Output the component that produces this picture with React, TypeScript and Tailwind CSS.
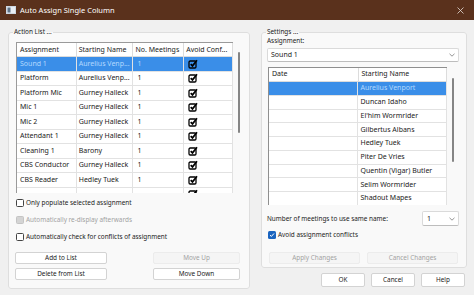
const leftRows = [
  ["Sound 1", "Aurelius Venp...", "1"],
  ["Platform", "Aurelius Venp...", "1"],
  ["Platform Mic", "Gurney Halleck", "1"],
  ["Mic 1", "Gurney Halleck", "1"],
  ["Mic 2", "Gurney Halleck", "1"],
  ["Attendant 1", "Gurney Halleck", "1"],
  ["Cleaning 1", "Barony", "1"],
  ["CBS Conductor", "Gurney Halleck", "1"],
  ["CBS Reader", "Hedley Tuek", "1"],
  ["", "", ""],
];

const rightRows = [
  "Aurelius Venport",
  "Duncan Idaho",
  "El'him Wormrider",
  "Gilbertus Albans",
  "Hedley Tuek",
  "Piter De Vries",
  "Quentin (Vigar) Butler",
  "Selim Wormrider",
  "Shadout Mapes",
];

function CheckGlyph() {
  return (
    <svg width="10" height="10" viewBox="0 0 10 10">
      <rect x="1" y="2" width="7" height="7" rx="1.2" fill="none" stroke="#000" strokeWidth="1.3" />
      <path d="M2.7 5.1 L4.5 6.9 L9 1.3" fill="none" stroke="#000" strokeWidth="1.7" />
    </svg>
  );
}

function Chevron() {
  return (
    <svg width="6" height="4" viewBox="0 0 6 4">
      <path d="M0.5 0.8 L3 3.2 L5.5 0.8" fill="none" stroke="#7a7a7a" strokeWidth="0.8" />
    </svg>
  );
}

function Box({ checked, disabled }: { checked?: boolean; disabled?: boolean }) {
  if (checked) {
    return (
      <span className="w-[8px] h-[8px] rounded-[1.5px] bg-[#1a64c0] flex items-center justify-center">
        <svg width="6" height="6" viewBox="0 0 6 6">
          <path d="M1 3.1 L2.4 4.4 L5 1.5" fill="none" stroke="#fff" strokeWidth="1" />
        </svg>
      </span>
    );
  }
  return (
    <span
      className={
        disabled
          ? "w-[8px] h-[8px] rounded-[1.5px] bg-[#d4d4d4] border border-[#c4c4c4]"
          : "w-[8px] h-[8px] rounded-[1.5px] bg-white border border-[#444]"
      }
    />
  );
}

function Button({ label, w, disabled }: { label: string; w: string; disabled?: boolean }) {
  return (
    <div
      className={
        (disabled
          ? "bg-[#f5f5f5] border-[#ececec] text-[#a3a3a3] "
          : "bg-white border-[#d3d3d3] text-[#1b1b1b] ") +
        w +
        " h-full border rounded-[2px] flex items-center justify-center"
      }
    >
      {label}
    </div>
  );
}

export default function App() {
  return (
    <div className="w-[474px] h-[295px] bg-[#f0f0f0] flex flex-col overflow-hidden font-['Noto_Sans',sans-serif] text-[6.4px] leading-[10px] text-[#1b1b1b]">
      {/* title bar */}
      <div className="h-[20px] bg-[#5a311c] flex items-center pl-[6px] pr-[10px] shrink-0">
        <svg width="10" height="8" viewBox="0 0 10 8">
          <rect x="0.5" y="0.5" width="9" height="7" fill="#e8eef4" stroke="#cfd8e2" />
          <rect x="1.5" y="1.5" width="3" height="5" fill="#5f7387" />
        </svg>
        <span className="ml-[4px] text-white text-[7.5px]">Auto Assign Single Column</span>
        <svg className="ml-auto" width="7" height="7" viewBox="0 0 7 7">
          <path d="M0.5 0.5 L6.5 6.5 M6.5 0.5 L0.5 6.5" stroke="#e6dcd6" strokeWidth="0.8" />
        </svg>
      </div>

      <div className="flex pl-[8px] pt-[8px] gap-[11px]">
        {/* Action list group */}
        <fieldset className="w-[242px] h-[261px] border border-[#dedede] rounded-[3px] bg-[#f9f9f9] pl-[6px] min-w-0">
          <legend className="-ml-[2px] px-[1px] leading-[8px]">Action List ...</legend>

          <div className="mt-[6px] ml-[1px] w-[226px] h-[151px] flex text-[7px]">
            <div className="w-[217px] h-full overflow-hidden border-t border-l border-[#9a9a9a] bg-white">
              <div className="flex h-[14px] border-b border-[#dcdcdc]">
                <div className="w-[60px] pl-[3px] border-r border-[#dcdcdc] flex items-center">Assignment</div>
                <div className="w-[57px] pl-[2px] border-r border-[#dcdcdc] flex items-center whitespace-nowrap">Starting Name</div>
                <div className="w-[51px] pl-[2px] border-r border-[#dcdcdc] flex items-center whitespace-nowrap">No. Meetings</div>
                <div className="w-[49px] pl-[2px] border-r border-[#dcdcdc] flex items-center whitespace-nowrap overflow-hidden">Avoid Conf...</div>
              </div>
              {leftRows.map((r, i) => (
                <div
                  key={i}
                  className={
                    (i === 0 ? "bg-[#3a8ee8] text-[#b3d9ff] " : "") +
                    "flex h-[14.5px] border-b border-[#e2e2e2]"
                  }
                >
                  <div className="w-[60px] pl-[3px] border-r border-[#e2e2e2] flex items-center whitespace-nowrap">{r[0]}</div>
                  <div className="w-[57px] pl-[2px] border-r border-[#e2e2e2] flex items-center whitespace-nowrap overflow-hidden">{r[1]}</div>
                  <div className="w-[51px] pl-[4px] border-r border-[#e2e2e2] flex items-center">{r[2]}</div>
                  <div className="w-[49px] pl-[4px] border-r border-[#e2e2e2] flex items-center">
                    <CheckGlyph />
                  </div>
                </div>
              ))}
            </div>
            <div className="ml-[5px] mt-[10px] w-[2px] h-[81px] rounded-full bg-[#858585]" />
          </div>

          <div className="mt-[5px] ml-[1px] h-[10px] flex items-center gap-[2px]">
            <Box />
            <span>Only populate selected assignment</span>
          </div>
          <div className="mt-[6.5px] ml-[1px] h-[10px] flex items-center gap-[2px] text-[#a2a2a2]">
            <Box disabled />
            <span>Automatically re-display afterwards</span>
          </div>
          <div className="mt-[7.5px] ml-[1px] h-[10px] flex items-center gap-[2px]">
            <Box />
            <span>Automatically check for conflicts of assignment</span>
          </div>

          <div className="mt-[10px] h-[12px] flex gap-[46px]">
            <Button label="Add to List" w="w-[92px]" />
            <Button label="Move Up" w="w-[87px]" disabled />
          </div>
          <div className="mt-[4px] h-[12px] flex gap-[46px]">
            <Button label="Delete from List" w="w-[92px]" />
            <Button label="Move Down" w="w-[87px]" />
          </div>
        </fieldset>

        <div className="w-[206px] flex flex-col">
          {/* Settings group */}
          <fieldset className="h-[240px] border border-[#dedede] rounded-[3px] bg-[#f9f9f9] pl-[5px] min-w-0">
            <legend className="-ml-[1px] px-[1px] leading-[8px]">Settings ...</legend>
            <div className="h-[10px] flex items-center">Assignment:</div>
            <div className="mt-[2px] w-[192px] h-[14px] bg-white border border-[#dadada] border-b-[#bdbdbd] rounded-[2px] flex items-center pl-[3px] pr-[3px] text-[7px]">
              <span>Sound 1</span>
              <span className="ml-auto"><Chevron /></span>
            </div>

            <div className="mt-[4.5px] ml-[1px] w-[191px] h-[138px] flex text-[7px]">
              <div className="w-[179px] h-full overflow-hidden border-t border-l border-[#8f8f8f] bg-white">
                <div className="flex h-[14.5px] border-b border-[#dcdcdc]">
                  <div className="w-[90px] pl-[3px] border-r border-[#dcdcdc] flex items-center">Date</div>
                  <div className="w-[89px] pl-[3px] border-r border-[#dcdcdc] flex items-center">Starting Name</div>
                </div>
                {rightRows.map((n, i) => (
                  <div
                    key={i}
                    className={
                      (i === 0 ? "bg-[#3a8ee8] text-[#b3d9ff] " : "") +
                      "flex h-[13.75px] border-b border-[#e2e2e2]"
                    }
                  >
                    <div className="w-[90px] border-r border-[#e2e2e2]" />
                    <div className="w-[89px] pl-[2px] border-r border-[#e2e2e2] flex items-center whitespace-nowrap">{n}</div>
                  </div>
                ))}
              </div>
              <div className="ml-[5px] mt-[11px] w-[2px] h-[84px] rounded-full bg-[#858585]" />
            </div>

            <div className="mt-[6.5px] w-[192px] h-[15px] flex items-center">
              <span>Number of meetings to use same name:</span>
              <div className="ml-auto w-[37px] h-full bg-white border border-[#dadada] border-b-[#bdbdbd] rounded-[2px] flex items-center pl-[4px] pr-[3px] text-[7px]">
                <span>1</span>
                <span className="ml-auto"><Chevron /></span>
              </div>
            </div>

            <div className="mt-[4px] ml-[1px] h-[10px] flex items-center gap-[2px]">
              <Box checked />
              <span>Avoid assignment conflicts</span>
            </div>

            <div className="mt-[12px] ml-[2px] h-[12px] flex gap-[7px]">
              <Button label="Apply Changes" w="w-[91px]" disabled />
              <Button label="Cancel Changes" w="w-[91px]" disabled />
            </div>
          </fieldset>

          <div className="mt-[5px] h-[14px] flex justify-end gap-[6px] pr-[2px]">
            <Button label="OK" w="w-[44px]" />
            <Button label="Cancel" w="w-[44px]" />
            <Button label="Help" w="w-[44px]" />
          </div>
        </div>
      </div>
    </div>
  );
}
